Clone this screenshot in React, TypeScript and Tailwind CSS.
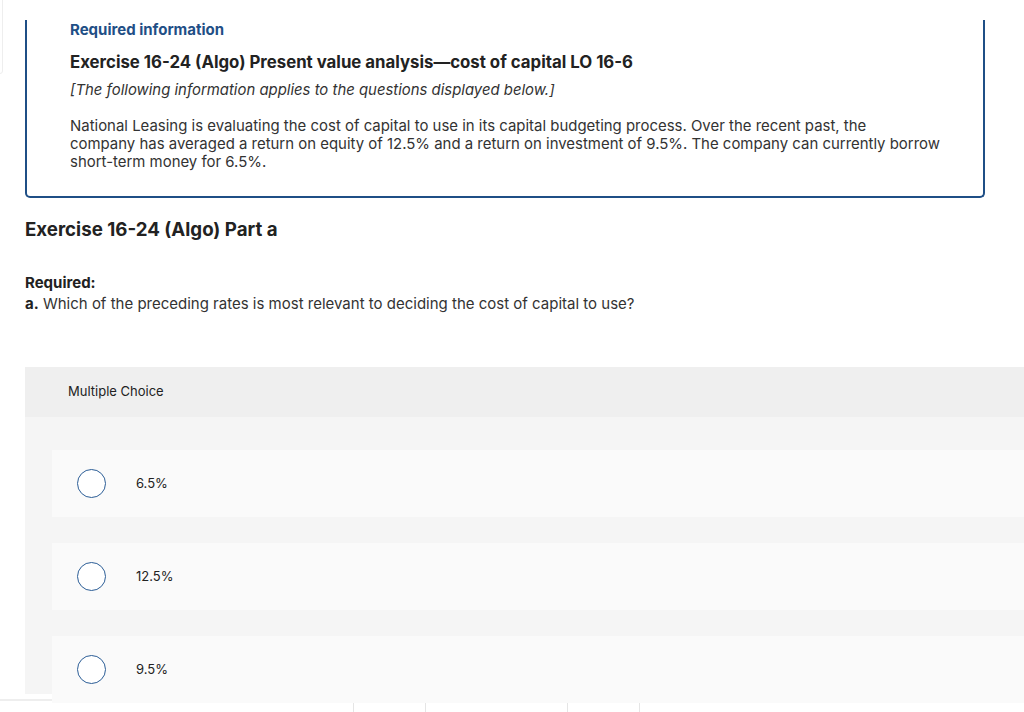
export default function App() {
  const options = ['6.5%', '12.5%', '9.5%']

  return (
    <div className="relative h-[712px] w-[1024px] overflow-hidden bg-white text-[#222] font-['Inter','Liberation_Sans',sans-serif]">
      {/* faint leftover edge of a side panel */}
      <div className="absolute left-[-6px] top-[-6px] h-[80px] w-[9px] rounded-[3px] border border-[#eee]" />

      <div className="pt-5 pl-[25px] pr-[39px]">
        <div className="rounded-b-[5px] border-x-2 border-b-2 border-[#1f4f86] pl-[43px] pr-[20px] pt-[1px] pb-[25px]">
          <p className="text-[15px] font-bold leading-[18px] text-[#1f4f86]">Required information</p>
          <h2 className="mt-[13px] text-[16.8px] font-bold leading-5 text-[#222]">
            Exercise 16-24 (Algo) Present value analysis—cost of capital LO 16-6
          </h2>
          <p className="mt-[9px] text-[14.9px] italic leading-[18px] text-[#333]">
            [The following information applies to the questions displayed below.]
          </p>
          <p className="mt-[18px] text-[14.95px] leading-[18px] text-[#333]">
            National Leasing is evaluating the cost of capital to use in its capital budgeting process. Over the recent past, the
            <br />
            company has averaged a return on equity of 12.5% and a return on investment of 9.5%. The company can currently borrow
            <br />
            short-term money for 6.5%.
          </p>
        </div>
      </div>

      <h1 className="mt-[20px] pl-[25px] text-[18.7px] font-bold leading-6 text-[#222]">Exercise 16-24 (Algo) Part a</h1>

      <div className="mt-[30px] pl-[25px] text-[15px] leading-[21px] text-[#333]">
        <p className="font-bold text-[#222]">Required:</p>
        <p>
          <span className="font-bold text-[#222]">a.</span> Which of the preceding rates is most relevant to deciding the cost of capital to use?
        </p>
      </div>

      <div className="ml-[25px] mt-[53px] h-[327px] bg-[#f5f5f5]">
        <div className="flex h-[50px] items-center bg-[#efefef] pl-[43px] text-[13px] text-[#222]">Multiple Choice</div>
        <div className="flex flex-col gap-[26px] pl-[27px] pt-[33px]">
          {options.map((o) => (
            <div key={o} className="flex h-[67px] items-center bg-[#fafafa] pl-[25px]">
              <span className="h-[29px] w-[29px] rounded-full border-[1.5px] border-[#2b5d96] bg-white" />
              <span className="ml-[30px] text-[13px] text-[#222]">{o}</span>
            </div>
          ))}
        </div>
      </div>

      <div className="mt-[5px] h-[2px] bg-[#eeeeee]" />
      <div className="relative h-[12px]">
        <span className="absolute left-[353px] top-[2px] h-[10px] w-px bg-[#e5e5e5]" />
        <span className="absolute left-[425px] top-[2px] h-[10px] w-px bg-[#e5e5e5]" />
        <span className="absolute left-[567px] top-[2px] h-[10px] w-px bg-[#e5e5e5]" />
        <span className="absolute left-[639px] top-[2px] h-[10px] w-px bg-[#e5e5e5]" />
      </div>
    </div>
  )
}
